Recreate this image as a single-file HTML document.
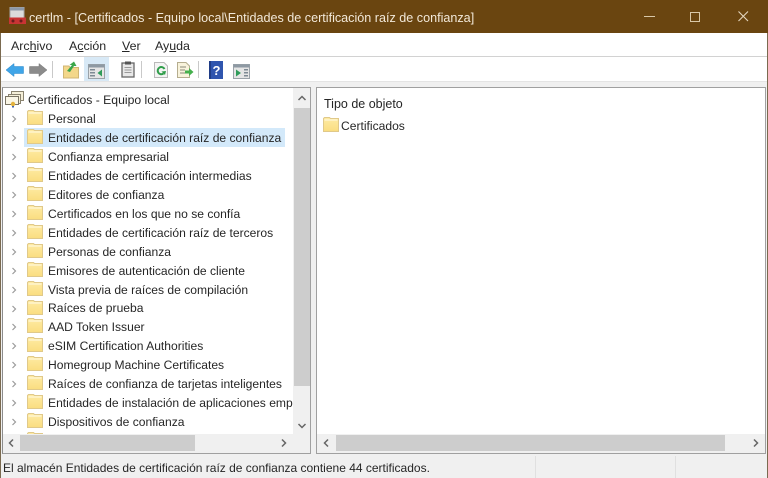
<!DOCTYPE html>
<html lang="es"><head><meta charset="utf-8"><title>certlm</title>
<style>
html,body{margin:0;padding:0}
body{width:768px;height:478px;overflow:hidden;position:relative;background:#f0f0f0;font-family:"Liberation Sans",sans-serif;font-size:12.1px;color:#262626;filter:blur(.3px)}
.a{position:absolute}
.t{position:absolute;white-space:nowrap;line-height:16px}
.m{font-size:12.4px}
u{text-decoration:underline;text-underline-offset:1px}
svg{position:absolute;overflow:visible}
.sep{position:absolute;width:1px;top:61px;height:17px;background:#c9c9c9}
</style></head><body>
<svg width="0" height="0" style="position:absolute"><defs>
<linearGradient id="g" x1="0" y1="0" x2="0" y2="1"><stop offset="0" stop-color="#feeba4"/><stop offset="1" stop-color="#fadd80"/></linearGradient>
<symbol id="f" viewBox="0 0 16 15"><path d="M.5 2.500V14.500H15.500V1.500H7.500L6.500.5H1.500L.5 1.500Z" fill="url(#g)" stroke="#e0c98a"/><path d="M1.500 2.500H14.500V3.500H1.500Z" fill="#fffbe6"/></symbol>
<symbol id="c" viewBox="0 0 8 10"><path d="M2.500 2 5.500 5 2.500 8" fill="none" stroke="#9a9a9a" stroke-width="1.200"/></symbol>
</defs></svg>

<div class="a" style="left:0;top:0;width:768px;height:33px;background:#6a4510"></div>
<svg style="left:9px;top:7px" width="17" height="18"><rect x="1" y="0.500" width="14" height="12" fill="#dcdcdc" stroke="#a8a8a8"/><rect x="1" y="0.500" width="14" height="3" fill="#8c98a8"/><path d="M0 10.500H17V17H0Z" fill="#c83434"/><circle cx="4" cy="14" r="1.500" fill="#6a1c1c"/><circle cx="12" cy="14" r="1.500" fill="#6a1c1c"/></svg>
<div class="t" style="left:29px;top:10px;color:#f2e8d8;font-size:12.6px">certlm - [Certificados - Equipo local\Entidades de certificación raíz de confianza]</div>
<div class="a" style="left:644px;top:16px;width:11px;height:1px;background:#d9c8a8"></div>
<div class="a" style="left:690px;top:12px;width:8px;height:8px;border:1px solid #d9c8a8"></div>
<svg style="left:738px;top:11px" width="11" height="11"><path d="M.5.500 10 10M10 .5 .5 10" stroke="#e3d6bf" stroke-width="1.100"/></svg>

<div class="a" style="left:0;top:33px;width:768px;height:23px;background:#fff"></div>
<div class="t m" style="left:11px;top:38px"><span>Arc<u>h</u>ivo</span></div>
<div class="t m" style="left:69px;top:38px">A<u>c</u>ción</div>
<div class="t m" style="left:122px;top:38px"><u>V</u>er</div>
<div class="t m" style="left:155px;top:38px">Ay<u>u</u>da</div>
<div class="a" style="left:0;top:56px;width:768px;height:1px;background:#d2d2d2"></div>

<div class="a" style="left:0;top:57px;width:768px;height:24px;background:#fff"></div>
<div class="a" style="left:0;top:81px;width:768px;height:6px;background:#f0f0f0;border-top:1px solid #e4e4e4;box-sizing:border-box"></div>
<svg style="left:6px;top:62px" width="18" height="16"><path d="M0 8 8 1.500V4.500H17.500V11.500H8V14.500Z" fill="#3fa5e8" stroke="#2b86c8" stroke-width=".5" stroke-linejoin="round"/></svg>
<svg style="left:29px;top:62px" width="18" height="16"><path d="M18 8 10 1.500V4.500H.5V11.500H10V14.500Z" fill="#8b8b8b" stroke="#777" stroke-width=".5" stroke-linejoin="round"/></svg>
<div class="sep" style="left:52px"></div>
<svg style="left:63px;top:61px" width="16" height="18"><path d="M.5 5H6L7 6.500H15.500V17H.5Z" fill="#f3d78a" stroke="#d0b674"/><path d="M4 10 9 4H6.500L11 .5 13.500 5H11L7 11Z" fill="#3aa64a"/></svg>
<div class="a" style="left:84px;top:57px;width:25px;height:24px;background:#d8e9f6"></div>
<svg style="left:88px;top:64px" width="17" height="15"><rect x=".5" y=".5" width="16" height="14" fill="#e5e5e5" stroke="#9aa2a8"/><rect x=".5" y=".5" width="16" height="3" fill="#8e99a3"/><rect x="2" y="5" width="5" height="1.500" fill="#7e8a94"/><rect x="2" y="8" width="5" height="1.500" fill="#7e8a94"/><rect x="2" y="11" width="5" height="1.500" fill="#7e8a94"/><path d="M14 5.500V12.500L9.500 9Z" fill="#2f9c5a"/></svg>
<svg style="left:121px;top:61px" width="14" height="17"><rect x="1" y="2" width="12" height="14" fill="#e8e8e8" stroke="#666" stroke-width="1.300"/><rect x="4" y="0.500" width="6" height="3" fill="#555"/><path d="M3.500 6.500H10.500M3.500 9H10.500M3.500 11.500H10.500" stroke="#999"/></svg>
<div class="sep" style="left:141px"></div>
<svg style="left:154px;top:62px" width="14" height="16"><path d="M.5.500H10L13.500 4V15.500H.5Z" fill="#f4f4f4" stroke="#b9b9b9"/><path d="M10.500 7A3.600 3.600 0 1 0 9.500 11.500" fill="none" stroke="#2f9d4a" stroke-width="2"/><path d="M7.500 9.500 12 9 11 13Z" fill="#2f9d4a"/></svg>
<svg style="left:177px;top:62px" width="17" height="16"><path d="M.5.500H9L12.500 4V15.500H.5Z" fill="#f8f3dc" stroke="#b5ad8f"/><path d="M3 5H9M3 8H8M3 11H8" stroke="#8a8a7a"/><path d="M8 8.500H12V6L16.500 10 12 14V11.500H8Z" fill="#45b04d"/></svg>
<div class="sep" style="left:198px"></div>
<svg style="left:209px;top:61px" width="14" height="18"><rect width="14" height="18" fill="#2f55ae"/><rect x="0" y="0" width="2" height="18" fill="#1f3c86"/><text x="3.500" y="14" font-family="Liberation Sans" font-size="13" font-weight="bold" fill="#fff">?</text></svg>
<svg style="left:233px;top:64px" width="17" height="15"><rect x=".5" y=".5" width="16" height="14" fill="#e5e5e5" stroke="#9aa2a8"/><rect x=".5" y=".5" width="16" height="3" fill="#8e99a3"/><path d="M3 5.500V12.500L8 9Z" fill="#2f9c5a"/><rect x="11" y="5" width="4" height="1.500" fill="#7e8a94"/><rect x="11" y="8" width="4" height="1.500" fill="#7e8a94"/><rect x="11" y="11" width="4" height="1.500" fill="#7e8a94"/></svg>

<div class="a" style="left:2px;top:87px;width:309px;height:367px;background:#fff;border:1px solid #a0a0a0;border-left:1px solid #8c8c8c;box-sizing:border-box;overflow:hidden">
</div>
<svg style="left:5px;top:91px" width="19" height="17"><rect x="6.500" y=".5" width="12" height="9" fill="#f5efd8" stroke="#8a8370"/><rect x="3.500" y="3.500" width="12" height="9" fill="#f5efd8" stroke="#8a8370"/><rect x=".5" y="5.500" width="13" height="8" fill="#faf6e6" stroke="#7a7464"/><circle cx="8" cy="13" r="2.200" fill="#e3b23c"/><path d="M7 15V17L8 16 9 17V15" fill="#3f62b0"/></svg>
<div class="t" style="left:28px;top:92px;font-size:12.2px">Certificados - Equipo local</div>

<div class="a" style="left:24px;top:128px;width:261px;height:19px;background:#d3e9fa"></div>

<svg style="left:10px;top:114px" width="8" height="10"><use href="#c"/></svg><svg style="left:27px;top:110px" width="16" height="15"><use href="#f"/></svg><div class="t" style="left:48px;top:111px">Personal</div>
<svg style="left:10px;top:133px" width="8" height="10"><use href="#c"/></svg><svg style="left:27px;top:129px" width="16" height="15"><use href="#f"/></svg><div class="t" style="left:48px;top:130px">Entidades de certificación raíz de confianza</div>
<svg style="left:10px;top:152px" width="8" height="10"><use href="#c"/></svg><svg style="left:27px;top:148px" width="16" height="15"><use href="#f"/></svg><div class="t" style="left:48px;top:149px">Confianza empresarial</div>
<svg style="left:10px;top:171px" width="8" height="10"><use href="#c"/></svg><svg style="left:27px;top:167px" width="16" height="15"><use href="#f"/></svg><div class="t" style="left:48px;top:168px">Entidades de certificación intermedias</div>
<svg style="left:10px;top:190px" width="8" height="10"><use href="#c"/></svg><svg style="left:27px;top:186px" width="16" height="15"><use href="#f"/></svg><div class="t" style="left:48px;top:187px">Editores de confianza</div>
<svg style="left:10px;top:209px" width="8" height="10"><use href="#c"/></svg><svg style="left:27px;top:205px" width="16" height="15"><use href="#f"/></svg><div class="t" style="left:48px;top:206px">Certificados en los que no se confía</div>
<svg style="left:10px;top:228px" width="8" height="10"><use href="#c"/></svg><svg style="left:27px;top:224px" width="16" height="15"><use href="#f"/></svg><div class="t" style="left:48px;top:225px">Entidades de certificación raíz de terceros</div>
<svg style="left:10px;top:247px" width="8" height="10"><use href="#c"/></svg><svg style="left:27px;top:243px" width="16" height="15"><use href="#f"/></svg><div class="t" style="left:48px;top:244px">Personas de confianza</div>
<svg style="left:10px;top:266px" width="8" height="10"><use href="#c"/></svg><svg style="left:27px;top:262px" width="16" height="15"><use href="#f"/></svg><div class="t" style="left:48px;top:263px">Emisores de autenticación de cliente</div>
<svg style="left:10px;top:285px" width="8" height="10"><use href="#c"/></svg><svg style="left:27px;top:281px" width="16" height="15"><use href="#f"/></svg><div class="t" style="left:48px;top:282px">Vista previa de raíces de compilación</div>
<svg style="left:10px;top:304px" width="8" height="10"><use href="#c"/></svg><svg style="left:27px;top:300px" width="16" height="15"><use href="#f"/></svg><div class="t" style="left:48px;top:300px">Raíces de prueba</div>
<svg style="left:10px;top:322px" width="8" height="10"><use href="#c"/></svg><svg style="left:27px;top:318px" width="16" height="15"><use href="#f"/></svg><div class="t" style="left:48px;top:319px">AAD Token Issuer</div>
<svg style="left:10px;top:341px" width="8" height="10"><use href="#c"/></svg><svg style="left:27px;top:337px" width="16" height="15"><use href="#f"/></svg><div class="t" style="left:48px;top:338px">eSIM Certification Authorities</div>
<svg style="left:10px;top:360px" width="8" height="10"><use href="#c"/></svg><svg style="left:27px;top:356px" width="16" height="15"><use href="#f"/></svg><div class="t" style="left:48px;top:357px">Homegroup Machine Certificates</div>
<svg style="left:10px;top:379px" width="8" height="10"><use href="#c"/></svg><svg style="left:27px;top:375px" width="16" height="15"><use href="#f"/></svg><div class="t" style="left:48px;top:376px">Raíces de confianza de tarjetas inteligentes</div>
<svg style="left:10px;top:398px" width="8" height="10"><use href="#c"/></svg><svg style="left:27px;top:394px" width="16" height="15"><use href="#f"/></svg><div class="t" style="left:48px;top:395px;width:245px;overflow:hidden">Entidades de instalación de aplicaciones empresariales</div>
<svg style="left:10px;top:417px" width="8" height="10"><use href="#c"/></svg><svg style="left:27px;top:413px" width="16" height="15"><use href="#f"/></svg><div class="t" style="left:48px;top:414px">Dispositivos de confianza</div>
<div class="a" style="left:27px;top:432px;width:16px;height:2px;overflow:hidden"><svg style="left:0;top:0" width="16" height="15"><use href="#f"/></svg></div>

<div class="a" style="left:293px;top:88px;width:17px;height:346px;background:#f0f0f0"></div>
<div class="a" style="left:294px;top:108px;width:16px;height:278px;background:#cdcdcd"></div>
<svg style="left:297px;top:95px" width="10" height="7"><path d="M1.500 5 5 1.500 8.500 5" fill="none" stroke="#666" stroke-width="1.500"/></svg>
<svg style="left:297px;top:422px" width="10" height="7"><path d="M1.500 2 5 5.500 8.500 2" fill="none" stroke="#666" stroke-width="1.500"/></svg>
<div class="a" style="left:3px;top:434px;width:307px;height:19px;background:#f0f0f0"></div>
<div class="a" style="left:20px;top:435px;width:175px;height:16px;background:#cdcdcd"></div>
<svg style="left:8px;top:438px" width="7" height="10"><path d="M5 1.500 1.500 5 5 8.500" fill="none" stroke="#666" stroke-width="1.500"/></svg>
<svg style="left:280px;top:438px" width="7" height="10"><path d="M2 1.500 5.500 5 2 8.500" fill="none" stroke="#666" stroke-width="1.500"/></svg>

<div class="a" style="left:316px;top:87px;width:450px;height:367px;background:#fff;border:1px solid #a0a0a0;box-sizing:border-box"></div>
<div class="t" style="left:324px;top:96px;font-size:12.5px">Tipo de objeto</div>
<svg style="left:323px;top:117px" width="16" height="15"><use href="#f"/></svg>
<div class="t" style="left:341px;top:118px">Certificados</div>
<div class="a" style="left:317px;top:434px;width:448px;height:19px;background:#f0f0f0"></div>
<div class="a" style="left:336px;top:435px;width:389px;height:16px;background:#cdcdcd"></div>
<svg style="left:323px;top:438px" width="7" height="10"><path d="M5 1.500 1.500 5 5 8.500" fill="none" stroke="#666" stroke-width="1.500"/></svg>
<svg style="left:752px;top:438px" width="7" height="10"><path d="M2 1.500 5.500 5 2 8.500" fill="none" stroke="#666" stroke-width="1.500"/></svg>

<div class="a" style="left:0;top:454px;width:768px;height:24px;background:#f0f0f0"></div>
<div class="a" style="left:535px;top:456px;width:1px;height:22px;background:#e0e0e0"></div>
<div class="a" style="left:675px;top:456px;width:1px;height:22px;background:#e0e0e0"></div>
<div class="t" style="left:3px;top:460px;font-size:12px">El almacén Entidades de certificación raíz de confianza contiene 44 certificados.</div>
<div class="a" style="left:0;top:33px;width:1px;height:445px;background:#7a6a50"></div>
<div class="a" style="left:767px;top:33px;width:1px;height:445px;background:#7a6a50"></div>
</body></html>
